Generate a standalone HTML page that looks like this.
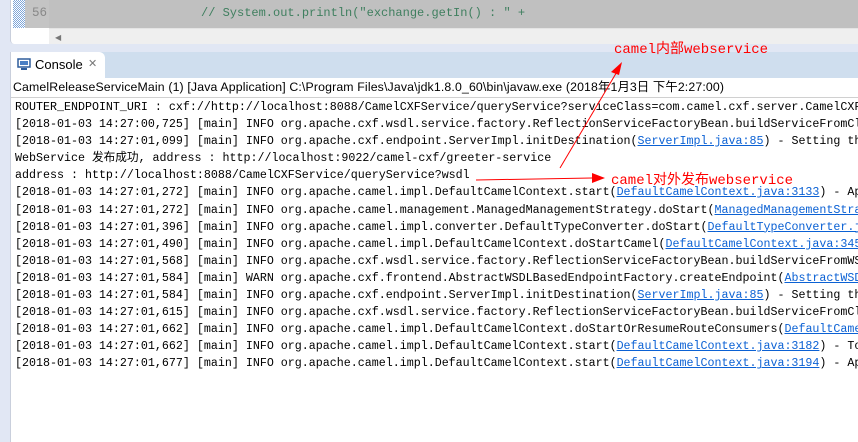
<!DOCTYPE html>
<html><head><meta charset="utf-8"><style>
body{margin:0;width:858px;height:442px;overflow:hidden;background:#e1e7f4;position:relative;font-family:"Liberation Sans",sans-serif}
.ed{position:absolute;left:10px;top:0;width:848px;height:44px;background:#fff;border-bottom-left-radius:4px;border-left:1px solid #c9cfdc;overflow:hidden}
.gray{position:absolute;left:38px;top:0;right:0;height:28px;background:#c0c0c0}
.gut{position:absolute;left:2px;top:0;width:12px;height:28px;background:repeating-conic-gradient(#7fa6d9 0 25%,#fff 0 50%) 0 0/2px 2px}
.ln{position:absolute;left:14px;top:0;width:24px;height:28px;background:#c4c4c4;color:#888;font:12.5px "Liberation Mono",monospace;text-align:right}
.code{position:absolute;left:190px;top:6px;color:#3f7f5f;font:12px "Liberation Mono",monospace;white-space:pre}
.sb{position:absolute;left:38px;top:28px;right:0;height:16px;background:#efefef;border-top:1px solid #e4e4e4}
.tabbar{position:absolute;left:10px;top:52px;right:0;height:26px;background:#cfdeee;border-left:1px solid #c9cfdc}
.tab{position:absolute;left:0;top:0;width:94px;height:26px;background:#fff;border-top-right-radius:6px;font-size:13px}
.con{position:absolute;left:10px;top:78px;right:0;bottom:0;background:#fff;border-left:1px solid #c9cfdc;overflow:hidden}
.title{position:absolute;left:2px;top:2px;font-size:12.3px;line-height:15px;color:#000;white-space:nowrap;letter-spacing:0.15px}
.sep{position:absolute;left:0;right:0;top:19px;border-top:1px solid #d0d0d0}
.out{position:absolute;left:4px;top:21px;font:11.67px/17.1px "Liberation Mono","Noto Sans CJK SC",monospace;white-space:pre;color:#000}
.out a{color:#0b61d4;text-decoration:underline}
.red{position:absolute;color:#f00;font:14px "Liberation Mono","Noto Sans CJK SC",monospace;white-space:nowrap}
</style></head><body>
<div class="ed"><div class="gut"></div><div class="ln"><div style="position:absolute;right:2px;top:6px">56</div></div><div class="gray"></div><div class="code">// System.out.println("exchange.getIn() : " +</div><div class="sb"><div style="position:absolute;left:6px;top:4px;font-size:8px;color:#777">◀</div></div></div>
<div class="tabbar"><div class="tab"><svg style="position:absolute;left:6px;top:6px" width="14" height="13"><rect x="1" y="1" width="12" height="8" fill="#fff" stroke="#2e5d9c" stroke-width="1.5"/><rect x="3" y="3" width="8" height="4" fill="#4a7fc4"/><rect x="4" y="10" width="6" height="2" fill="#2e5d9c"/></svg><span style="position:absolute;left:24px;top:5px">Console</span><span style="position:absolute;left:77px;top:5px;font-size:11px;color:#777">✕</span></div></div>
<div class="con"><div class="title">CamelReleaseServiceMain (1) [Java Application] C:\Program Files\Java\jdk1.8.0_60\bin\javaw.exe (2018年1月3日 下午2:27:00)</div><div class="sep"></div>
<div class="out">ROUTER_ENDPOINT_URI : cxf://http://localhost:8088/CamelCXFService/queryService?serviceClass=com.camel.cxf.server.CamelCXF
[2018-01-03 14:27:00,725] [main] INFO org.apache.cxf.wsdl.service.factory.ReflectionServiceFactoryBean.buildServiceFromCl
[2018-01-03 14:27:01,099] [main] INFO org.apache.cxf.endpoint.ServerImpl.initDestination(<a>ServerImpl.java:85</a>) - Setting th
WebService 发布成功, address : http://localhost:9022/camel-cxf/greeter-service
address : http://localhost:8088/CamelCXFService/queryService?wsdl
[2018-01-03 14:27:01,272] [main] INFO org.apache.camel.impl.DefaultCamelContext.start(<a>DefaultCamelContext.java:3133</a>) - Ap
[2018-01-03 14:27:01,272] [main] INFO org.apache.camel.management.ManagedManagementStrategy.doStart(<a>ManagedManagementStra</a>
[2018-01-03 14:27:01,396] [main] INFO org.apache.camel.impl.converter.DefaultTypeConverter.doStart(<a>DefaultTypeConverter.j</a>
[2018-01-03 14:27:01,490] [main] INFO org.apache.camel.impl.DefaultCamelContext.doStartCamel(<a>DefaultCamelContext.java:345</a>
[2018-01-03 14:27:01,568] [main] INFO org.apache.cxf.wsdl.service.factory.ReflectionServiceFactoryBean.buildServiceFromWS
[2018-01-03 14:27:01,584] [main] WARN org.apache.cxf.frontend.AbstractWSDLBasedEndpointFactory.createEndpoint(<a>AbstractWSD</a>
[2018-01-03 14:27:01,584] [main] INFO org.apache.cxf.endpoint.ServerImpl.initDestination(<a>ServerImpl.java:85</a>) - Setting th
[2018-01-03 14:27:01,615] [main] INFO org.apache.cxf.wsdl.service.factory.ReflectionServiceFactoryBean.buildServiceFromCl
[2018-01-03 14:27:01,662] [main] INFO org.apache.camel.impl.DefaultCamelContext.doStartOrResumeRouteConsumers(<a>DefaultCame</a>
[2018-01-03 14:27:01,662] [main] INFO org.apache.camel.impl.DefaultCamelContext.start(<a>DefaultCamelContext.java:3182</a>) - To
[2018-01-03 14:27:01,677] [main] INFO org.apache.camel.impl.DefaultCamelContext.start(<a>DefaultCamelContext.java:3194</a>) - Ap</div></div>
<svg style="position:absolute;left:0;top:0" width="858" height="442"><line x1="560" y1="168" x2="618" y2="70" stroke="#f00" stroke-width="1"/><polygon points="622,62 611,72 619,75" fill="#f00"/><line x1="476" y1="180" x2="592" y2="178" stroke="#f00" stroke-width="1"/><polygon points="605,178 592,173 592,183" fill="#f00"/></svg>
<div class="red" style="left:614px;top:38px">camel内部webservice</div>
<div class="red" style="left:611px;top:169px">camel对外发布webservice</div>
</body></html>
